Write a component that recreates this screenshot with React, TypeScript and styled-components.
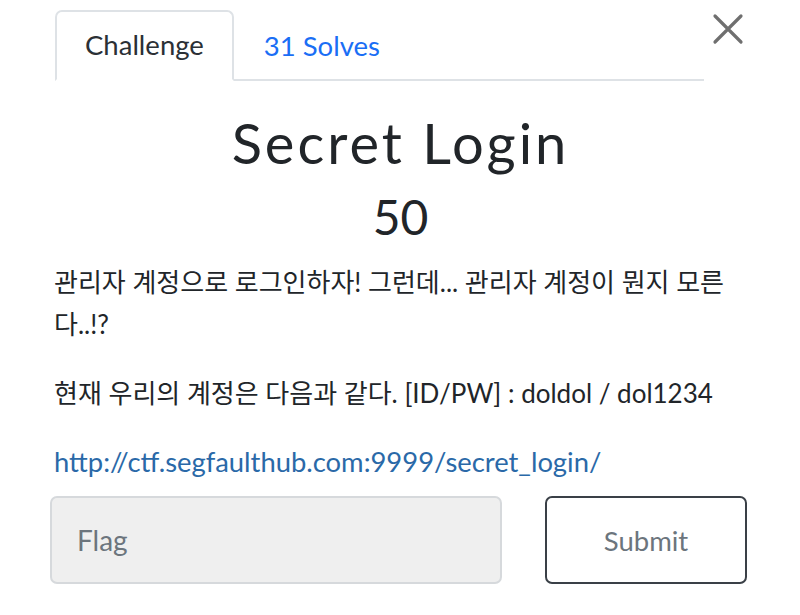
import styled, { createGlobalStyle } from "styled-components";

const GlobalStyle = createGlobalStyle`
  html, body {
    margin: 0;
    padding: 0;
    background: #ffffff;
  }
  body {
    font-family: Lato, "Noto Sans CJK KR", sans-serif;
    color: #212529;
  }
`;

const Modal = styled.div`
  width: 800px;
  height: 615px;
  box-sizing: border-box;
  padding: 10px 53px 0 54px;
  overflow: hidden;
`;

const Header = styled.div`
  display: flex;
  align-items: flex-start;
`;

const Tabs = styled.nav`
  display: flex;
  flex: 1;
  border-bottom: 2px solid #dee2e6;
  margin-left: 1px;
  height: 71px;
  box-sizing: border-box;
`;

const Tab = styled.div<{ $active?: boolean }>`
  display: flex;
  align-items: center;
  padding: 0 28px 2px 28px;
  height: 71px;
  box-sizing: border-box;
  margin-bottom: -2px;
  font-size: 27.5px;
  color: ${(p) => (p.$active ? "#2b3035" : "#1a6ef5")};
  background: ${(p) => (p.$active ? "#fff" : "transparent")};
  border: 2px solid ${(p) => (p.$active ? "#dee2e6" : "transparent")};
  border-bottom: ${(p) => (p.$active ? "2px solid #fff" : "none")};
  border-radius: 7px 7px 0 0;
`;

const Close = styled.button`
  width: 42px;
  height: 42px;
  margin: -2px -2px 0 3px;
  padding: 0;
  border: none;
  background: none;
  display: flex;
  align-items: center;
  justify-content: center;
`;

const Title = styled.h1`
  margin: 26px 0 0;
  text-align: center;
  font-weight: 400;
  font-size: 56px;
  letter-spacing: 3px;
  line-height: 72px;
  color: #212529;
`;

const Points = styled.h2`
  margin: 8px 0 0;
  text-align: center;
  font-weight: 400;
  font-size: 48px;
  line-height: 60px;
  color: #212529;
`;

const Description = styled.div`
  margin-top: 14px;
  font-size: 26px;
  line-height: 42px;
`;

const Para = styled.p`
  margin: 0 0 27px;
  &:last-child {
    margin-bottom: 13px;
  }
`;

const Link = styled.a`
  font-size: 27.4px;
  color: #2a69a8;
  text-decoration: none;
`;

const FormRow = styled.form`
  display: flex;
  gap: 43px;
`;

const FlagInput = styled.input`
  flex: 0 0 452px;
  height: 88px;
  box-sizing: border-box;
  margin-left: -4px;
  padding: 0 25px;
  background: #efefef;
  border: 2px solid #d6d9dc;
  border-radius: 7px;
  font-family: Lato, sans-serif;
  font-size: 28px;
  color: #495057;
  &::placeholder {
    color: #6c757d;
  }
`;

const SubmitButton = styled.button`
  width: 203px;
  height: 88px;
  box-sizing: border-box;
  background: #fff;
  border: 2px solid #3a4047;
  border-radius: 7px;
  font-family: Lato, sans-serif;
  font-size: 27.5px;
  color: #6c757d;
`;

export default function App() {
  return (
    <>
      <GlobalStyle />
      <Modal>
        <Header>
          <Tabs>
            <Tab $active>Challenge</Tab>
            <Tab>31 Solves</Tab>
          </Tabs>
          <Close aria-label="Close">
            <svg width="32" height="32" viewBox="0 0 32 32">
              <path d="M3 3 L29 29 M29 3 L3 29" stroke="#6f6f6f" strokeWidth="3.2" strokeLinecap="round" />
            </svg>
          </Close>
        </Header>
        <Title>Secret Login</Title>
        <Points>50</Points>
        <Description>
          <Para>관리자 계정으로 로그인하자! 그런데... 관리자 계정이 뭔지 모른다..!?</Para>
          <Para>현재 우리의 계정은 다음과 같다. [ID/PW] : doldol / dol1234</Para>
          <Para>
            <Link href="#">http://ctf.segfaulthub.com:9999/secret_login/</Link>
          </Para>
        </Description>
        <FormRow onSubmit={(e) => e.preventDefault()}>
          <FlagInput placeholder="Flag" />
          <SubmitButton type="submit">Submit</SubmitButton>
        </FormRow>
      </Modal>
    </>
  );
}
